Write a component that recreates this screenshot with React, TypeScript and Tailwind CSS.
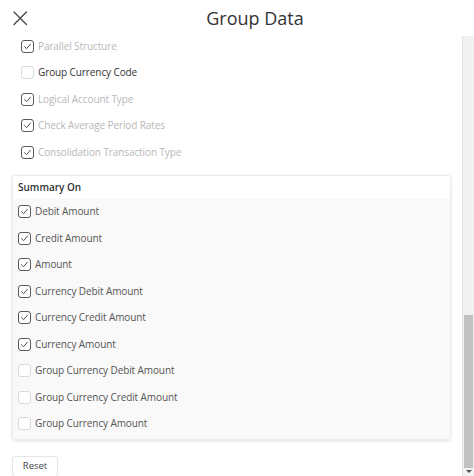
import React from 'react';

// ─────────────────────────────────────────────────────────────────────────────
// Data
// ─────────────────────────────────────────────────────────────────────────────

interface Option {
  label: string;
  checked: boolean;
  disabled?: boolean;
}

const TOP_OPTIONS: Option[] = [
  { label: 'Parallel Structure', checked: true, disabled: true },
  { label: 'Group Currency Code', checked: false },
  { label: 'Logical Account Type', checked: true, disabled: true },
  { label: 'Check Average Period Rates', checked: true, disabled: true },
  { label: 'Consolidation Transaction Type', checked: true, disabled: true },
];

const SUMMARY_OPTIONS: Option[] = [
  { label: 'Debit Amount', checked: true },
  { label: 'Credit Amount', checked: true },
  { label: 'Amount', checked: true },
  { label: 'Currency Debit Amount', checked: true },
  { label: 'Currency Credit Amount', checked: true },
  { label: 'Currency Amount', checked: true },
  { label: 'Group Currency Debit Amount', checked: false },
  { label: 'Group Currency Credit Amount', checked: false },
  { label: 'Group Currency Amount', checked: false },
];

function CheckBox({ checked }: { checked: boolean }) {
  if (!checked) {
    return <span className="block w-[13px] h-[13px] rounded-[3px] border border-[#dadada] bg-white shrink-0" />;
  }
  return (
    <span className="flex items-center justify-center w-[13px] h-[13px] rounded-[3px] border border-[#5a5a5a] bg-white shrink-0">
      <svg width="9" height="9" viewBox="0 0 9 9" fill="none">
        <path d="M1.6 4.7 L3.6 6.7 L7.4 2.2" stroke="#4a4a4a" strokeWidth="1" strokeLinecap="round" strokeLinejoin="round" />
      </svg>
    </span>
  );
}

function OptionRow({ option, muted }: { option: Option; muted?: boolean }) {
  const color = option.disabled ? 'text-[#b8b8b8]' : muted ? 'text-[#555555]' : 'text-[#333333]';
  return (
    <div className="flex items-center gap-[4px] h-[26.5px]">
      <CheckBox checked={option.checked} />
      <span className={`text-[10px] tracking-[-0.1px] ${color}`}>{option.label}</span>
    </div>
  );
}

export default function App() {
  return (
    <div
      className="w-[474px] h-[476px] bg-white flex flex-col overflow-hidden"
      style={{ fontFamily: '"Open Sans", "Noto Sans", sans-serif' }}
    >
      {/* Header */}
      <div className="h-[33px] shrink-0 relative flex items-center justify-center">
        <button className="absolute left-[12px] top-[10px] w-[16px] h-[16px] flex items-center justify-center">
          <svg width="16" height="16" viewBox="0 0 16 16" fill="none">
            <path d="M2 2 L14.5 14.5 M14.5 2 L2 14.5" stroke="#444" strokeWidth="1.3" strokeLinecap="round" />
          </svg>
        </button>
        <h1 className="text-[18px] text-[#333] ml-[36px] mt-[4px]">Group Data</h1>
      </div>

      <div className="flex-1 flex min-h-0">
        {/* Scrolled content */}
        <div className="flex-1 overflow-hidden">
          <div className="pl-[21px]">
            {TOP_OPTIONS.map((o) => (
              <OptionRow key={o.label} option={o} />
            ))}
          </div>

          <div className="mt-[9px] ml-[12px] mr-[11px] rounded-[3px] border border-[#ececec] shadow-[0_1px_3px_rgba(0,0,0,0.12)] overflow-hidden">
            <div className="h-[23px] bg-white flex items-center px-[5px]">
              <span className="text-[10px] font-semibold text-[#333]">Summary On</span>
            </div>
            <div className="bg-[#f9f9f9] px-[5px] pb-[2px]">
              {SUMMARY_OPTIONS.map((o) => (
                <OptionRow key={o.label} option={o} muted />
              ))}
            </div>
          </div>

          <div className="mt-[11px] ml-[12px]">
            <button className="w-[46px] h-[21px] bg-white border border-[#e6e6e6] rounded-[3px] text-[9.5px] text-[#444] shadow-[0_1px_2px_rgba(0,0,0,0.06)]">
              Reset
            </button>
          </div>
        </div>

        {/* Scrollbar */}
        <div className="w-[12px] mt-[3px] bg-[#f1f1f1] border-l border-[#e4e4e4] flex flex-col">
          <div className="flex-1" />
          <div className="h-[153px] bg-[#c1c1c1] mx-[1px]" />
          <div className="h-[8px] flex items-center justify-center">
            <svg width="6" height="4" viewBox="0 0 6 4">
              <path d="M0 0 L6 0 L3 3 Z" fill="#505050" />
            </svg>
          </div>
        </div>
      </div>
    </div>
  );
}
